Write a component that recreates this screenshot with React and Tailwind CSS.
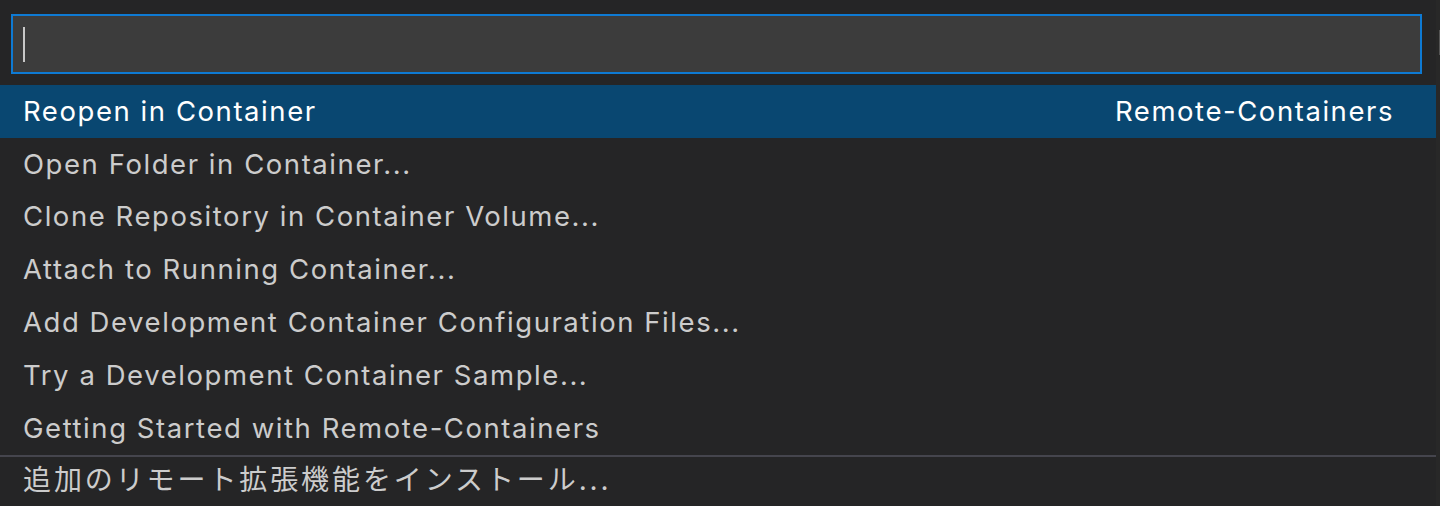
import React from "react";

const items = [
  "Open Folder in Container...",
  "Clone Repository in Container Volume...",
  "Attach to Running Container...",
  "Add Development Container Configuration Files...",
  "Try a Development Container Sample...",
  "Getting Started with Remote-Containers",
];

export default function App() {
  return (
    <div
      className="w-[1440px] h-[506px] overflow-hidden bg-[#252526] flex"
      style={{ fontFamily: 'Inter, "Noto Sans CJK JP", sans-serif' }}
    >
      <div className="w-[1436px] flex flex-col">
        <div className="pt-[14px] pl-[11px] pr-[14px] pb-[11px]">
          <div className="h-[60px] border-2 border-[#0e7ad3] bg-[#3c3c3c] flex items-center pl-[10px]">
            <div className="w-[2px] h-[35px] bg-[#c8c8c8]" />
          </div>
        </div>
        <div className="h-[52.8px] bg-[#094771] flex items-center justify-between pl-[23px] pr-[42px] text-[27.5px] tracking-[1.56px] text-white">
          <span>Reopen in Container</span>
          <span>Remote-Containers</span>
        </div>
        {items.map((t) => (
          <div
            key={t}
            className="h-[52.8px] flex items-center pl-[23px] text-[27.5px] tracking-[1.56px] text-[#cccccc]"
          >
            {t}
          </div>
        ))}
        <div className="h-[2px] bg-[#45454d]" />
        <div className="flex-1 flex items-center pl-[23px] text-[28px] tracking-[2.9px] text-[#cccccc] pb-[2px]">
          追加のリモート拡張機能をインストール...
        </div>
      </div>
      <div className="flex-1 bg-[#282828] pt-[30px]">
        <div className="ml-[3px] w-[1px] h-[25px] bg-[#555555]" />
      </div>
    </div>
  );
}
